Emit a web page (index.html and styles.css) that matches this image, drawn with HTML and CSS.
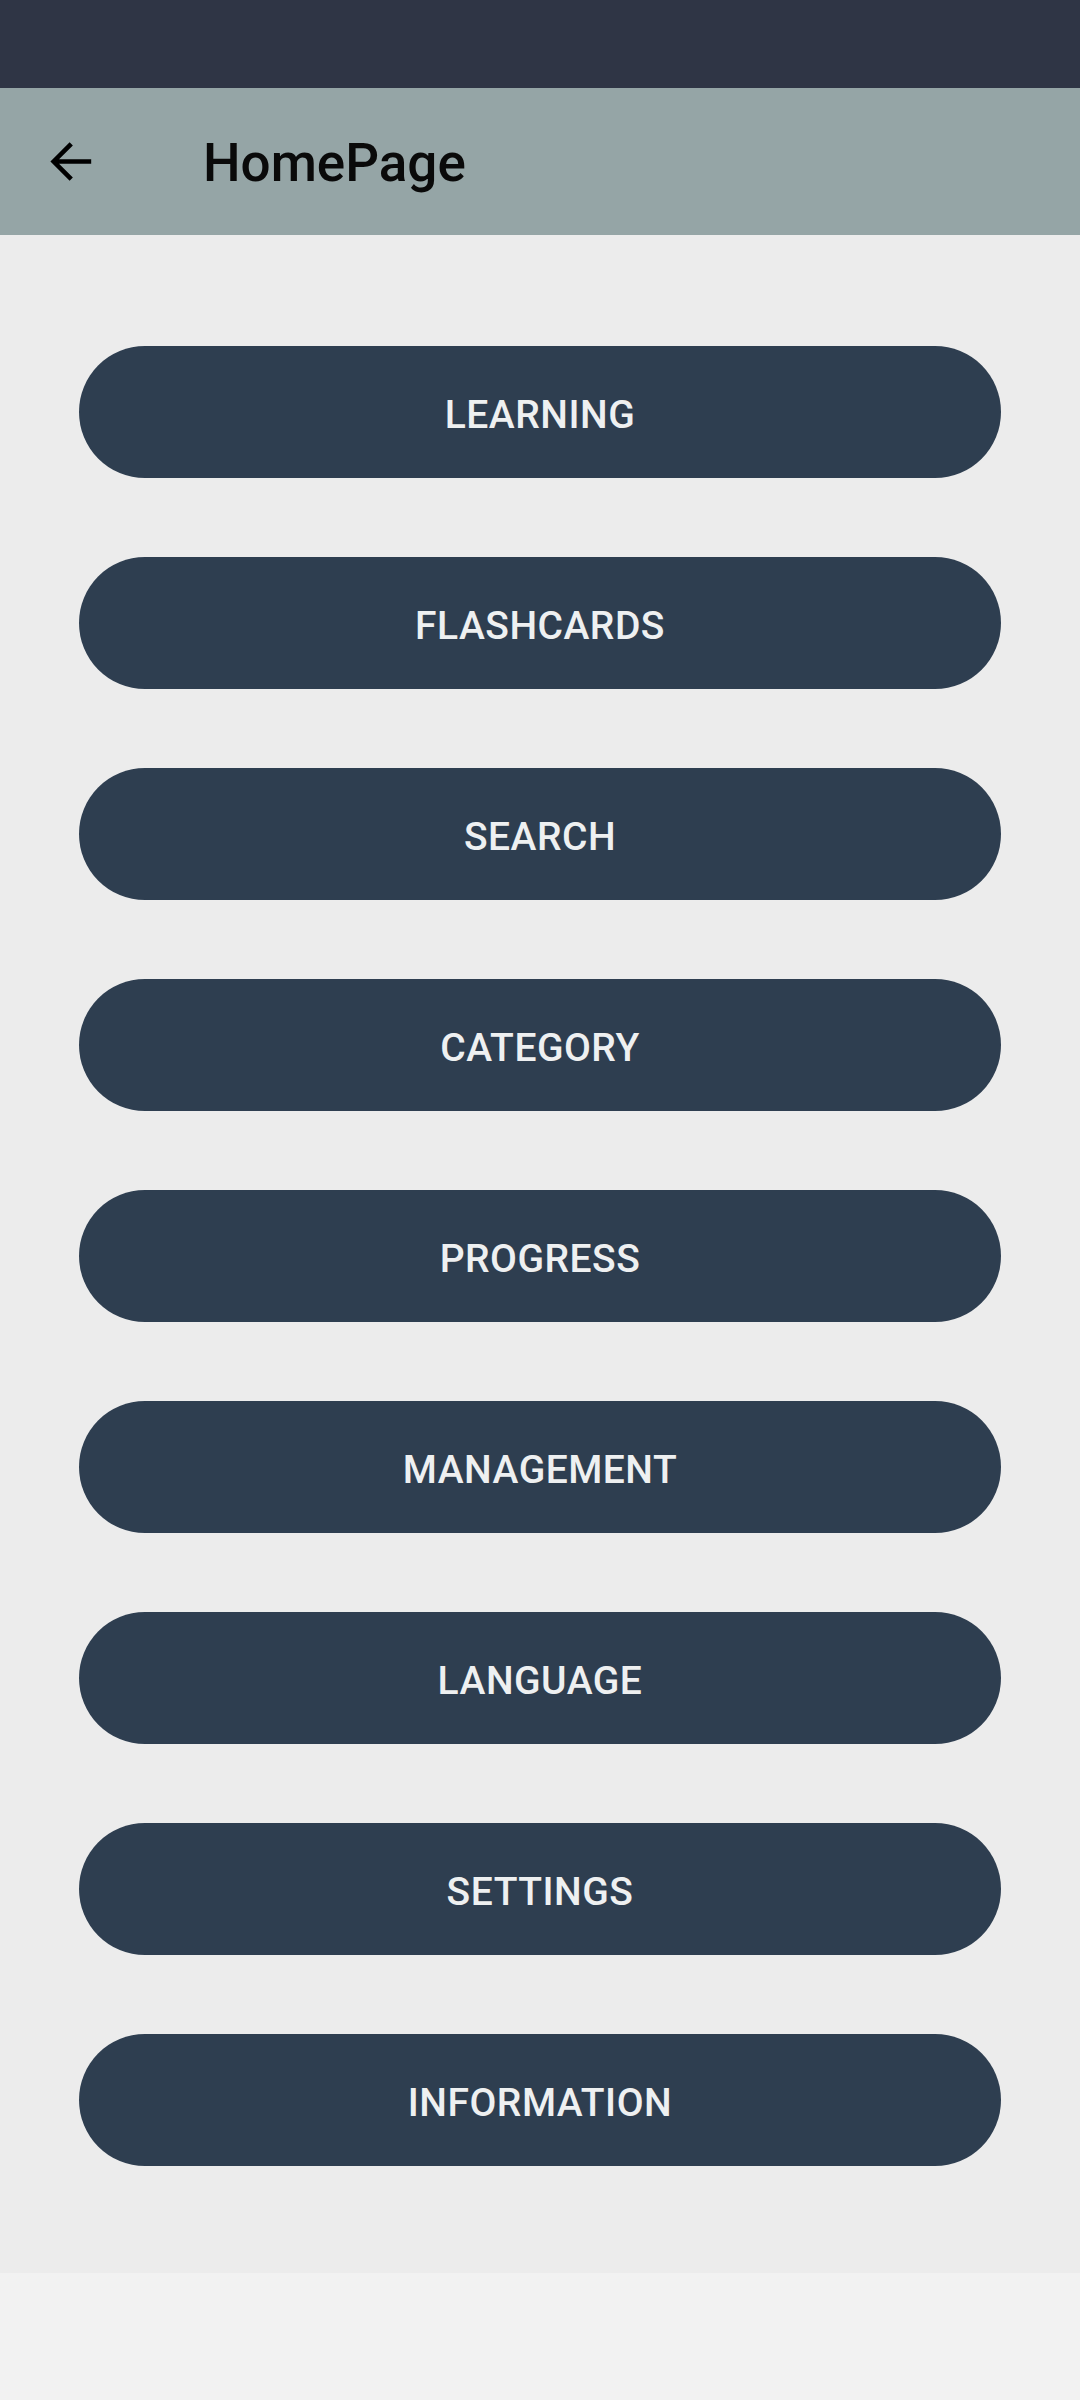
FILE: index.html
```html
<!DOCTYPE html>
<html lang="en">
<head>
<meta charset="utf-8">
<title>HomePage</title>
<link rel="stylesheet" href="styles.css">
</head>
<body>
<div class="statusbar"></div>
<header class="appbar">
  <button class="nav-back" aria-label="Back">
    <svg viewBox="0 0 24 24" width="63" height="63"><path d="M19.5 12H5.2M11.9 5.3L5.2 12l6.7 6.7" fill="none" stroke="#000" stroke-width="1.75" stroke-linecap="butt"/></svg>
  </button>
  <h1 class="title">HomePage</h1>
</header>
<main class="menu">
  <button class="menu-btn">LEARNING</button>
  <button class="menu-btn">FLASHCARDS</button>
  <button class="menu-btn">SEARCH</button>
  <button class="menu-btn">CATEGORY</button>
  <button class="menu-btn">PROGRESS</button>
  <button class="menu-btn">MANAGEMENT</button>
  <button class="menu-btn">LANGUAGE</button>
  <button class="menu-btn">SETTINGS</button>
  <button class="menu-btn">INFORMATION</button>
</main>
<div class="bottom"></div>
</body>
</html>
```
FILE: styles.css
```css
* { box-sizing: border-box; }
html, body {
  margin: 0;
  padding: 0;
  width: 1080px;
  height: 2400px;
  background: #f2f2f2;
  font-family: Roboto, "Liberation Sans", sans-serif;
}
body {
  display: flex;
  flex-direction: column;
}
.statusbar {
  height: 88px;
  background: #2f3545;
  flex: none;
}
.appbar {
  height: 147px;
  background: #95a5a6;
  display: flex;
  align-items: center;
  flex: none;
}
.nav-back {
  width: 63px;
  height: 63px;
  margin-left: 40px;
  padding: 0;
  border: 0;
  background: none;
  display: flex;
}
.title {
  margin: 3px 0 0 100px;
  font-size: 53px;
  font-weight: 500;
  color: #0a0a0a;
  line-height: 1;
}
.menu {
  background: #ececec;
  height: 2038px;
  flex: none;
  padding: 111px 79px 0 79px;
  display: flex;
  flex-direction: column;
  gap: 79px;
}
.menu-btn {
  height: 132px;
  flex: none;
  border: 0;
  border-radius: 66px;
  background: #2e3e50;
  color: #eef0f1;
  font-family: Roboto, "Liberation Sans", sans-serif;
  font-size: 39px;
  font-weight: 500;
  letter-spacing: 0.5px;
  padding: 5px 0 0 0;
}
.bottom {
  flex: 1;
  background: #f2f2f2;
}
```
